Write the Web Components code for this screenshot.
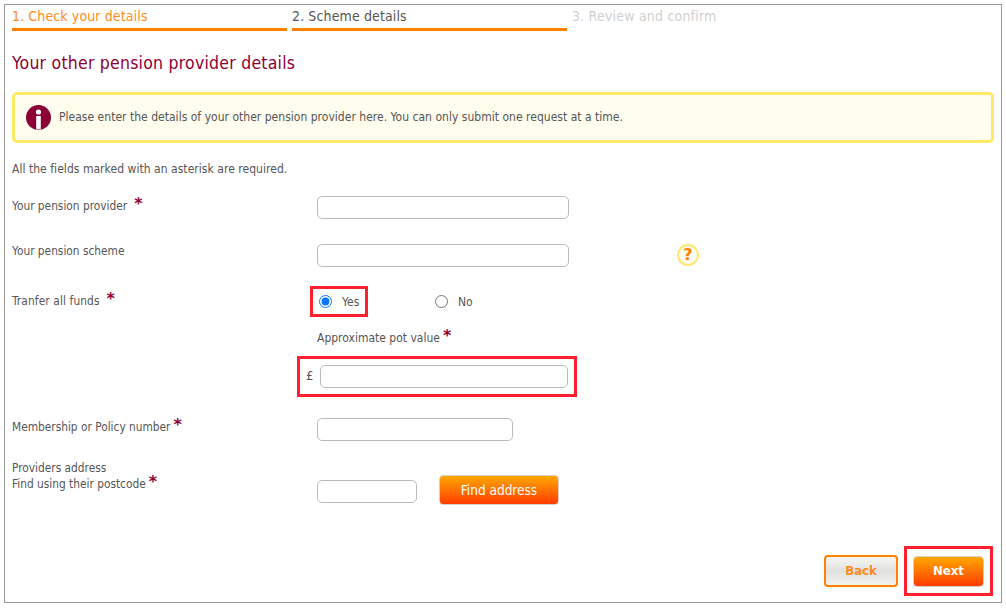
<!DOCTYPE html>
<html lang="en">
<head>
<meta charset="utf-8">
<title>Your other pension provider details</title>
<style>
  html, body { margin: 0; padding: 0; background: #fff; }
  body { font-family: "DejaVu Sans", "Liberation Sans", sans-serif; font-stretch: condensed; font-size: 12px; color: #555; }
</style>
</head>
<body>
<pension-page>
  <step-tabs slot="steps"></step-tabs>
  <h-title slot="title">Your other pension provider details</h-title>
  <info-alert slot="alert">Please enter the details of your other pension provider here. You can only submit one request at a time.</info-alert>
  <provider-form slot="form"></provider-form>
</pension-page>

<script>
class PensionPage extends HTMLElement {
  constructor() {
    super();
    this.attachShadow({ mode: 'open' }).innerHTML = `
      <style>
        :host { display: block; box-sizing: border-box; width: 998px; height: 599px; margin: 4px 0 0 4px; border: 1px solid #999; padding: 0 7px; }
        .col { display: flex; flex-direction: column; }
      </style>
      <div class="col">
        <slot name="steps"></slot>
        <slot name="title"></slot>
        <slot name="alert"></slot>
        <slot name="form"></slot>
      </div>
    `;
  }
}

class StepTabs extends HTMLElement {
  constructor() {
    super();
    this.attachShadow({ mode: 'open' }).innerHTML = `
      <style>
        :host { display: flex; gap: 5px; }
        .tab { width: 275px; box-sizing: border-box; height: 26px; padding-top: 3px; font-size: 14px; line-height: 17px; letter-spacing: .12px; border-bottom: 3px solid #ff8000; color: #555; }
        .tab.on { color: #ff8c1a; }
        .tab.off { border-bottom-color: transparent; color: #d0d0d0; letter-spacing: .2px; }
      </style>
      <div class="tab on">1. Check your details</div>
      <div class="tab">2. Scheme details</div>
      <div class="tab off">3. Review and confirm</div>
    `;
  }
}

class HTitle extends HTMLElement {
  constructor() {
    super();
    this.attachShadow({ mode: 'open' }).innerHTML = `
      <style>
        :host { display: block; margin-top: 20px; height: 24px; font-size: 17.5px; line-height: 24px; color: #8d0034; letter-spacing: .23px; }
      </style>
      <slot></slot>
    `;
  }
}

class InfoAlert extends HTMLElement {
  constructor() {
    super();
    this.attachShadow({ mode: 'open' }).innerHTML = `
      <style>
        :host { display: flex; align-items: center; box-sizing: border-box; height: 51px; margin-top: 17px; padding-left: 11px; gap: 8px; border: 3px solid #ffe866; border-radius: 5px; background: #fffdee; line-height: 16px; letter-spacing: .02px; }
        svg { flex: none; display: block; }
        span { margin-top: -2px; }
      </style>
      <svg width="25" height="25" viewBox="0 0 25 25" aria-hidden="true">
        <circle cx="12.5" cy="12.5" r="12.5" fill="#8d0034"/>
        <circle cx="12.5" cy="7" r="2.6" fill="#fff"/>
        <path d="M10.2 11h4.6v13.6h-4.6z" fill="#fff"/>
      </svg>
      <span><slot></slot></span>
    `;
  }
}

class RequiredMark extends HTMLElement {
  constructor() {
    super();
    this.attachShadow({ mode: 'open' }).innerHTML = `
      <style>
        :host { display: inline-block; color: #8d0034; font-size: 16px; font-weight: bold; line-height: 10px; vertical-align: 1px; margin-left: 3px; font-stretch: normal; letter-spacing: 0; }
        :host([wide]) { margin-left: 7px; }
      </style>*
    `;
  }
}

class TextField extends HTMLElement {
  constructor() {
    super();
    const w = this.getAttribute('width') || 252;
    this.attachShadow({ mode: 'open' }).innerHTML = `
      <style>
        :host { display: block; flex: none; }
        input { display: block; box-sizing: border-box; width: ${w}px; height: 23px; margin: 0; padding: 0 6px; border: 1px solid #bbb; border-radius: 5px; background: #fff; outline: none; }
      </style>
      <input type="text">
    `;
  }
}

class ActionButton extends HTMLElement {
  constructor() {
    super();
    const w = this.getAttribute('width') || 71;
    const h = this.getAttribute('height') || 31;
    const ghost = this.hasAttribute('ghost');
    const weight = this.hasAttribute('plain') ? 'normal' : 'bold';
    const size = this.hasAttribute('plain') ? '13.5px' : '13px';
    this.attachShadow({ mode: 'open' }).innerHTML = `
      <style>
        :host { display: block; flex: none; }
        button { display: block; box-sizing: border-box; width: ${w}px; height: ${h}px; margin: 0; padding: 0; border-radius: 4px; font: inherit; font-size: ${size}; font-weight: ${weight};
          ${ghost
            ? 'color: #ff8a1e; border: 2px solid #ff8000; background: linear-gradient(#f6f6f4, #e0e1de 50%, #f3f3f1);'
            : 'color: #fff; border: 1px solid #d8d0c4; background: linear-gradient(#ffa800, #ff3c00);'}
        }
      </style>
      <button type="button"><slot></slot></button>
    `;
  }
}

class MarkBox extends HTMLElement {
  constructor() {
    super();
    this.attachShadow({ mode: 'open' }).innerHTML = `
      <style>
        :host { display: flex; align-items: center; box-sizing: border-box; border: 3px solid #ff1f2d; }
      </style>
      <slot></slot>
    `;
  }
}

class RadioOption extends HTMLElement {
  constructor() {
    super();
    const checked = this.hasAttribute('checked') ? 'checked' : '';
    this.attachShadow({ mode: 'open' }).innerHTML = `
      <style>
        :host { display: inline-flex; align-items: center; gap: 10px; }
        input { display: block; width: 13px; height: 13px; margin: 0; accent-color: #0a75ff; }
      </style>
      <input type="radio" name="${this.getAttribute('group')}" ${checked}>
      <span><slot></slot></span>
    `;
  }
}

class HelpIcon extends HTMLElement {
  constructor() {
    super();
    this.attachShadow({ mode: 'open' }).innerHTML = `
      <style>
        :host { display: block; flex: none; width: 22px; height: 22px; }
        .c { box-sizing: border-box; width: 22px; height: 22px; border: 2px solid #ffe675; border-radius: 50%; background: #fffdee; color: #ff8000; font-size: 16px; font-weight: bold; line-height: 18px; text-align: center; font-stretch: normal; }
      </style>
      <div class="c">?</div>
    `;
  }
}

class ProviderForm extends HTMLElement {
  constructor() {
    super();
    this.attachShadow({ mode: 'open' }).innerHTML = `
      <style>
        :host { display: block; line-height: 16px; }
        .req { margin-top: 18px; height: 16px; letter-spacing: .04px; }
        .row { display: grid; grid-template-columns: 305px 1fr; }
        .lbl { font-size: 11.8px; }
        .ctl { display: flex; align-items: center; }
        .r1 { margin-top: 19px; }
        .r1 .lbl { padding-top: 2px; }
        .r2 { margin-top: 25px; }
        .r2 .lbl { margin-top: -1px; }
        .help { margin-left: 108px; margin-top: -1px; }
        .r3 { margin-top: 19px; }
        .r3 > .lbl { padding-top: 7px; letter-spacing: .12px; }
        .radios { display: flex; align-items: center; margin-left: -7px; }
        .yes { height: 31px; width: 58px; padding-left: 6px; }
        .no { margin-left: 67px; }
        .r3b { margin-top: 13px; height: 16px; }
        .pot { margin-top: 10px; margin-left: -20px; height: 41px; width: 280px; padding-left: 6px; gap: 6px; }
        .pot span { font-size: 13px; margin-top: -2px; width: 8px; }
        .r4 { margin-top: 21px; }
        .r4 .lbl { padding-top: 1px; }
        .addr { height: 32px; }
        .r5 { margin-top: 19px; }
        .r5 .ctl { margin-top: 15px; gap: 22px; align-items: flex-end; }
        .r5 text-field { margin-bottom: 2px; }
        .foot { display: flex; justify-content: flex-end; align-items: center; margin-top: 41px; margin-right: 1px; }
        .foot .next { height: 50px; width: 89px; margin-left: 6px; justify-content: center; }
      </style>
      <div class="req">All the fields marked with an asterisk are required.</div>
      <div class="row r1">
        <div class="lbl">Your pension provider<required-mark wide></required-mark></div>
        <div class="ctl"><text-field></text-field></div>
      </div>
      <div class="row r2">
        <div class="lbl">Your pension scheme</div>
        <div class="ctl"><text-field></text-field><help-icon class="help"></help-icon></div>
      </div>
      <div class="row r3">
        <div class="lbl">Tranfer all funds<required-mark wide></required-mark></div>
        <div>
          <div class="radios">
            <mark-box class="yes"><radio-option group="funds" checked>Yes</radio-option></mark-box>
            <radio-option class="no" group="funds">No</radio-option>
          </div>
          <div class="r3b">Approximate pot value<required-mark></required-mark></div>
          <mark-box class="pot"><span>£</span><text-field width="248"></text-field></mark-box>
        </div>
      </div>
      <div class="row r4">
        <div class="lbl">Membership or Policy number<required-mark></required-mark></div>
        <div class="ctl"><text-field width="196"></text-field></div>
      </div>
      <div class="row r5">
        <div class="lbl addr">Providers address<br>Find using their postcode<required-mark></required-mark></div>
        <div class="ctl"><text-field width="100"></text-field><action-button width="120" height="30" plain>Find address</action-button></div>
      </div>
      <div class="foot">
        <action-button width="74" height="32" ghost>Back</action-button>
        <mark-box class="next"><action-button>Next</action-button></mark-box>
      </div>
    `;
  }
}

customElements.define('pension-page', PensionPage);
customElements.define('step-tabs', StepTabs);
customElements.define('h-title', HTitle);
customElements.define('info-alert', InfoAlert);
customElements.define('required-mark', RequiredMark);
customElements.define('text-field', TextField);
customElements.define('action-button', ActionButton);
customElements.define('mark-box', MarkBox);
customElements.define('radio-option', RadioOption);
customElements.define('help-icon', HelpIcon);
customElements.define('provider-form', ProviderForm);
</script>
</body>
</html>
